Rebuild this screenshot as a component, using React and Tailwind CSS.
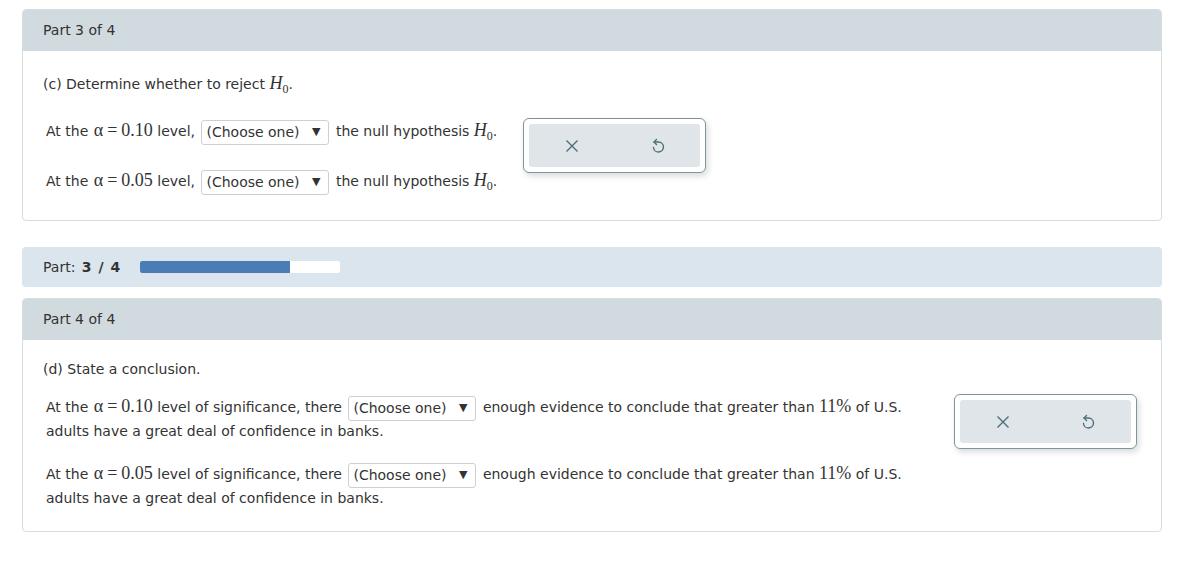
import React from "react";

const serif = "font-['Liberation_Serif','DejaVu_Serif',serif] text-[18px] leading-none";

function H0() {
  return (
    <span className={serif}>
      <i>H</i>
      <span className="relative top-[4px] text-[12px]">0</span>
    </span>
  );
}

function Alpha({ value }) {
  return (
    <span className={serif}>
      <span className="ml-[1px]">α</span>
      <span className="mx-[4px]">=</span>
      <span>{value}</span>
    </span>
  );
}

function Choose() {
  return (
    <span className="inline-flex items-center justify-between align-middle w-[128px] h-[25px] -my-[2px] mx-[2px] pl-[4px] pr-[8px] border border-[#cfcfcf] rounded-[3px] bg-white text-[#333]">
      <span>(Choose one)</span>
      <span className="text-[11px]">▼</span>
    </span>
  );
}

function Feedback() {
  return (
    <div className="shrink-0 -mt-px w-[183px] h-[55px] rounded-[6px] border border-[#7d959e] bg-white p-[5px] shadow-[2px_3px_6px_rgba(0,0,0,0.15)]">
      <div className="h-full rounded-[3px] bg-[#dfe5e8] flex">
        <button className="flex-1 flex items-center justify-center" aria-label="Clear">
          <svg width="14" height="14" viewBox="0 0 14 14" fill="none" stroke="#4d6d78" strokeWidth="1.4">
            <path d="M1.5 1.5 L12.5 12.5 M12.5 1.5 L1.5 12.5" />
          </svg>
        </button>
        <button className="flex-1 flex items-center justify-center" aria-label="Reset">
          <svg width="14" height="16" viewBox="0 0 14 16" fill="none" stroke="#4d6d78" strokeWidth="1.4" strokeLinecap="round" strokeLinejoin="round">
            <path d="M5.5 1.5 L3 4 L5.5 6.5" />
            <path d="M3 4 H7.5 A5 5 0 1 1 2.5 9.5" />
          </svg>
        </button>
      </div>
    </div>
  );
}

function Header({ children }) {
  return <div className="h-[41px] bg-[#d1dade] px-[20px] flex items-center">{children}</div>;
}

export default function App() {
  return (
    <div className="min-h-screen bg-white pt-[9px] px-[22px] font-['DejaVu_Sans',Verdana,sans-serif] text-[14px] text-[#333]">
      <div className="w-[1140px]">
        <section className="rounded-[4px] border border-[#d9dcdd] overflow-hidden">
          <Header>Part 3 of 4</Header>
          <div className="pl-[20px] pt-[21px] pb-[27px]">
            <p className="leading-[24px] h-[24px]">
              (c) Determine whether to reject <H0 />.
            </p>
            <div className="mt-[23px] flex items-start gap-[26px]">
              <div className="pl-[3px] max-w-[885px]">
                <p className="leading-[24px] h-[24px]">
                  At the <Alpha value="0.10" /> level, <Choose /> the null hypothesis <H0 />.
                </p>
                <p className="mt-[26px] leading-[24px] h-[24px]">
                  At the <Alpha value="0.05" /> level, <Choose /> the null hypothesis <H0 />.
                </p>
              </div>
              <Feedback />
            </div>
          </div>
        </section>

        <div className="mt-[26px] h-[40px] rounded-[4px] bg-[#dae5ee] px-[21px] flex items-center">
          <span className="w-[97px]">
            Part: <b className="font-bold ml-[2px] tracking-[1px]">3 / 4</b>
          </span>
          <div className="w-[200px] h-[12px] rounded-[2px] bg-white overflow-hidden">
            <div className="w-[150px] h-full bg-[#4a7cb6]" />
          </div>
        </div>

        <section className="mt-[11px] rounded-[4px] border border-[#d9dcdd] overflow-hidden">
          <Header>Part 4 of 4</Header>
          <div className="pl-[20px] pt-[17px] pb-[21px]">
            <p className="leading-[24px]">(d) State a conclusion.</p>
            <div className="mt-[14px] flex items-start gap-[26px]">
              <div className="pl-[3px] max-w-[885px]">
                <p className="leading-[24px]">
                  At the <Alpha value="0.10" /> level of significance, there <Choose /> enough evidence to conclude that greater than <span className={serif}>11%</span> of U.S. adults have a great deal of confidence in banks.
                </p>
                <p className="mt-[19px] leading-[24px]">
                  At the <Alpha value="0.05" /> level of significance, there <Choose /> enough evidence to conclude that greater than <span className={serif}>11%</span> of U.S. adults have a great deal of confidence in banks.
                </p>
              </div>
              <Feedback />
            </div>
          </div>
        </section>
      </div>
    </div>
  );
}
